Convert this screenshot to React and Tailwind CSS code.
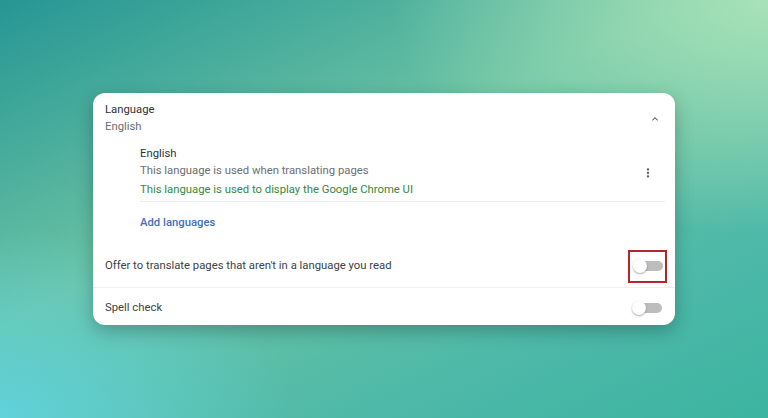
import React from 'react';

const Toggle = () => (
  <div className="relative w-[30px] h-[14px] flex items-center">
    <div className="w-[28px] h-[10px] ml-[2px] rounded-full bg-[#bdbdbd]" />
    <div className="absolute left-0 top-0 w-[14px] h-[14px] rounded-full bg-white shadow-[0_1px_2px_rgba(0,0,0,0.35)]" />
  </div>
);

const App = () => {
  return (
    <div
      className="w-full h-screen flex items-center justify-center bg-[radial-gradient(ellipse_70%_80%_at_100%_0%,#a8e2b8_0%,rgba(168,226,184,0)_70%),radial-gradient(ellipse_55%_65%_at_0%_100%,#60d2da_0%,rgba(96,210,218,0)_70%),linear-gradient(155deg,#269694_0%,#6cc4a4_42%,#4cb8a8_78%,#3cb4a0_100%)]"
      style={{ fontFamily: 'Roboto, "Liberation Sans", sans-serif' }}
    >
      <div className="w-[582px] h-[232px] bg-white rounded-[12px] shadow-[0_6px_18px_rgba(0,0,0,0.25)] flex flex-col overflow-hidden">
        {/* Language header */}
        <div className="flex items-center justify-between pl-[12px] pr-[14px] h-[52px]">
          <div className="flex flex-col self-start pt-[8px]">
            <span className="text-[11.3px] leading-[17px] text-[#303134]">Language</span>
            <span className="text-[11.3px] leading-[17px] text-[#6b6e72]">English</span>
          </div>
          <svg width="12" height="12" viewBox="0 0 24 24" className="text-[#5f6368]">
            <path d="M7.41 15.41L12 10.83l4.59 4.58L18 14l-6-6-6 6z" fill="currentColor" />
          </svg>
        </div>

        {/* Language list */}
        <div className="ml-[47px] mr-[10px] flex items-center justify-between border-b border-[#ececec] h-[57px]">
          <div className="flex flex-col">
            <span className="text-[11.3px] leading-[17px] text-[#303134]">English</span>
            <span className="text-[11.3px] leading-[17px] text-[#6b6e72]">This language is used when translating pages</span>
            <span className="text-[11.3px] leading-[22px] text-[#2f8a43]">This language is used to display the Google Chrome UI</span>
          </div>
          <svg width="14" height="14" viewBox="0 0 24 24" className="text-[#5f6368] mr-[10px]">
            <path
              d="M12 8c1.1 0 2-.9 2-2s-.9-2-2-2-2 .9-2 2 .9 2 2 2zm0 2c-1.1 0-2 .9-2 2s.9 2 2 2 2-.9 2-2-.9-2-2-2zm0 6c-1.1 0-2 .9-2 2s.9 2 2 2 2-.9 2-2-.9-2-2-2z"
              fill="currentColor"
            />
          </svg>
        </div>

        <div className="ml-[47px] h-[43px] flex items-center">
          <span className="text-[11.3px] font-medium text-[#3f6fc0]">Add languages</span>
        </div>

        {/* Offer to translate */}
        <div className="flex items-center justify-between pl-[12px] pr-[13px] h-[43px] border-b border-[#efefef]">
          <span className="text-[11.3px] text-[#3c3f43]">Offer to translate pages that aren't in a language you read</span>
          <div className="border-2 border-[#b3262c] w-[39px] h-[33px] flex items-center justify-center -mr-[5px]">
            <Toggle />
          </div>
        </div>

        {/* Spell check */}
        <div className="flex-1 flex items-center justify-between pl-[12px] pr-[13px] pt-[3px]">
          <span className="text-[11.3px] text-[#3c3f43]">Spell check</span>
          <Toggle />
        </div>
      </div>
    </div>
  );
};

export default App;
